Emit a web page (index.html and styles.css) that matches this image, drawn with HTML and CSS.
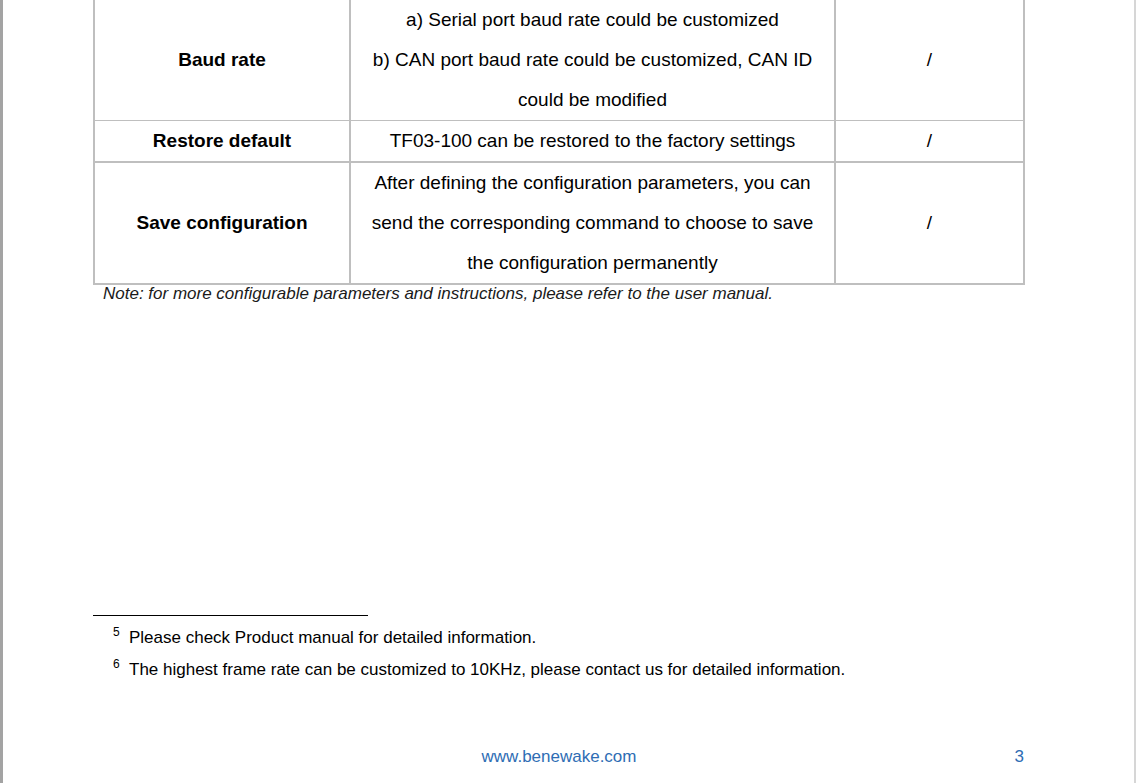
FILE: index.html
```html
<!DOCTYPE html>
<html lang="en">
<head>
<meta charset="utf-8">
<title>Benewake TF03 - page 3</title>
<link rel="stylesheet" href="styles.css">
</head>
<body>
<div class="page">
  <div class="content">
    <table class="spec">
      <colgroup>
        <col class="c1"><col class="c2"><col class="c3">
      </colgroup>
      <tbody>
        <tr class="r-tall r-first">
          <th>Baud rate</th>
          <td>a) Serial port baud rate could be customized<br>b) CAN port baud rate could be customized, CAN ID<br>could be modified</td>
          <td class="last">/</td>
        </tr>
        <tr class="r-short">
          <th>Restore default</th>
          <td>TF03-100 can be restored to the factory settings</td>
          <td class="last">/</td>
        </tr>
        <tr class="r-tall">
          <th>Save configuration</th>
          <td>After defining the configuration parameters, you can<br>send the corresponding command to choose to save<br>the configuration permanently</td>
          <td class="last">/</td>
        </tr>
      </tbody>
    </table>
    <p class="note">Note: for more configurable parameters and instructions, please refer to the user manual.</p>

    <div class="footnotes">
      <hr class="fn-rule">
      <p class="fn"><sup class="fn-num">5</sup><span>Please check Product manual for detailed information.</span></p>
      <p class="fn"><sup class="fn-num">6</sup><span>The highest frame rate can be customized to 10KHz, please contact us for detailed information.</span></p>
    </div>

    <div class="footer">
      <span class="f-left"></span>
      <span class="f-url">www.benewake.com</span>
      <span class="f-page">3</span>
    </div>
  </div>
</div>
</body>
</html>
```

FILE: styles.css
```css
html, body {
  margin: 0;
  padding: 0;
  background: #ffffff;
}

body {
  font-family: "Liberation Sans", Arial, sans-serif;
  color: #000000;
}

.page {
  box-sizing: border-box;
  width: 1136px;
  height: 783px;
  border-left: 3px solid #a3a3a3;
  border-right: 2px solid #d6d6d6;
  overflow: hidden;
  background: #ffffff;
}

.content {
  box-sizing: border-box;
  width: 932px;
  margin-left: 90px;
  display: flex;
  flex-direction: column;
  height: 783px;
}

.spec {
  border-collapse: separate;
  border-spacing: 0;
  table-layout: fixed;
  width: 932px;
  font-size: 19px;
}

.spec .c1 { width: 256px; }
.spec .c2 { width: 485px; }
.spec .c3 { width: 191px; }

.spec th,
.spec td {
  border-left: 2px solid #bfbfbf;
  border-bottom: 2px solid #bfbfbf;
  padding: 0;
  text-align: center;
  vertical-align: middle;
  line-height: 40px;
}

.spec th {
  font-weight: bold;
}

.spec td.last {
  border-right: 2px solid #bfbfbf;
}

.spec .r-first th,
.spec .r-first td {
  border-bottom-width: 1px;
}

.spec .r-tall th,
.spec .r-tall td {
  height: 120px;
}

.spec .r-short th,
.spec .r-short td {
  height: 40px;
}

.note {
  margin: 0;
  padding-left: 10px;
  font-size: 17px;
  line-height: 18px;
  font-style: italic;
  color: #1a1a1a;
}

.footnotes {
  margin-top: 312px;
}

.fn-rule {
  width: 275px;
  height: 0;
  margin: 0 0 13px 0;
  border: 0;
  border-top: 1px solid #000000;
}

.fn {
  margin: 0 0 14px 0;
  padding-left: 20px;
  font-size: 17px;
  line-height: 18px;
  display: flex;
  align-items: flex-start;
  color: #000000;
}

.fn-num {
  font-size: 12px;
  line-height: 11px;
  width: 16px;
  flex: none;
  vertical-align: baseline;
  position: relative;
  top: -2px;
}

.footer {
  margin-top: 55px;
  display: grid;
  grid-template-columns: 1fr auto 1fr;
  font-size: 17px;
  line-height: 18px;
  color: #2e6db4;
}

.f-url {
  text-align: center;
}

.f-page {
  justify-self: end;
  padding-right: 1px;
}
```
